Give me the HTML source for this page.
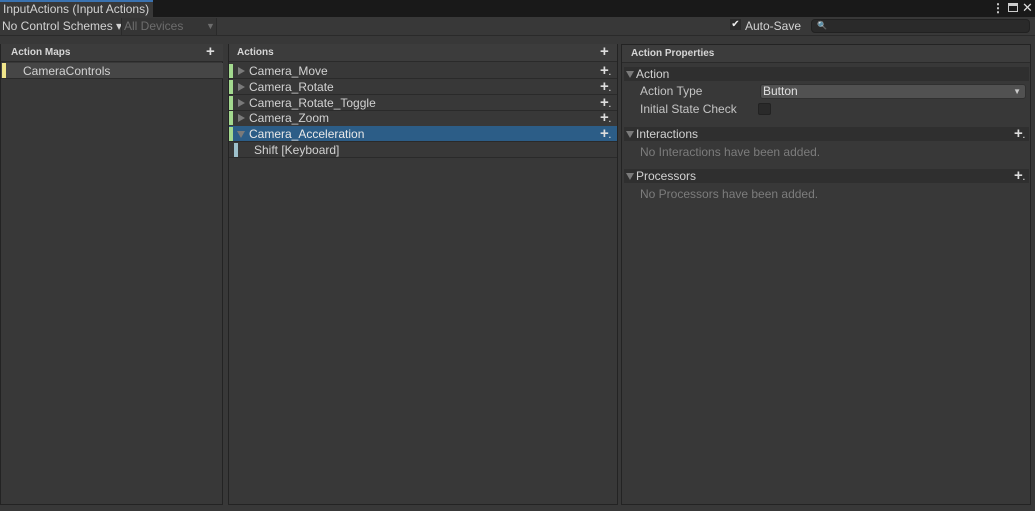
<!DOCTYPE html>
<html><head><style>
*{margin:0;padding:0;box-sizing:border-box}
body{width:1035px;height:511px;background:#383838;font-family:"Liberation Sans",sans-serif;font-size:12px;color:#c4c4c4;position:relative;overflow:hidden}
.a{position:absolute}
.row{position:absolute;height:16px;line-height:16px;border-bottom:1px solid #2a2a2a}
.plus{position:absolute;color:#ddd;font-size:15px;font-weight:bold;line-height:14px}
.tri{position:absolute;width:0;height:0}
.tr{border-top:4px solid transparent;border-bottom:4px solid transparent;border-left:7px solid #7a7a7a}
.td{border-left:4px solid transparent;border-right:4px solid transparent;border-top:7px solid #7a7a7a}
.bar{position:absolute;width:4px;height:14px}
</style></head><body>
<div class="a" style="left:0;top:0;width:1035px;height:17px;background:#191919"></div>
<div class="a" style="left:0;top:0;width:153px;height:17px;background:#383838;border-top:2px solid #3a72b0;padding-left:3px;line-height:15px;color:#d2d2d2">InputActions (Input Actions)</div>
<div class="a" style="left:992px;top:1px;color:#ddd;font-weight:bold;font-size:12px">⋮</div>
<div class="a" style="left:1008px;top:3px;width:10px;height:9px;border:1px solid #ccc;border-top:3px solid #ccc"></div>
<div class="a" style="left:1022px;top:0px;color:#ddd;font-size:13px">✕</div>
<div class="a" style="left:0;top:17px;width:1035px;height:19px;background:#383838;border-bottom:1px solid #2a2a2a"></div>
<div class="a" style="left:2px;top:19px;line-height:14px;color:#d2d2d2">No Control Schemes ▾</div>
<div class="a" style="left:121px;top:18px;width:96px;height:17px;background:#353535;border-left:1px solid #2a2a2a;border-right:1px solid #2a2a2a;line-height:16px;padding-left:2px;color:#6d6d6d">All Devices<span style="position:absolute;left:84px;font-size:9px">▼</span></div>
<div class="a" style="left:730px;top:19px;width:11px;height:11px;background:#2a2a2a;color:#eee;font-size:10px;line-height:11px;text-align:center">✔</div>
<div class="a" style="left:745px;top:19px;line-height:14px;color:#d2d2d2">Auto-Save</div>
<div class="a" style="left:811px;top:19px;width:219px;height:14px;background:#2a2a2a;border-radius:4px;border:1px solid #212121;color:#bbb;font-size:8px;padding-left:5px;line-height:12px">🔍</div>

<!-- left panel -->
<div class="a" style="left:1px;top:44px;width:222px;height:461px;background:#383838;border-right:1px solid #232323;border-bottom:1px solid #232323"></div>
<div class="a" style="left:1px;top:44px;width:222px;height:18px;background:#3c3c3c;border-bottom:1px solid #2a2a2a;font-weight:bold;font-size:10px;line-height:18px;padding-left:10px;color:#d6d6d6">Action Maps</div>
<div class="plus" style="left:206px;top:45px">+</div>
<div class="row" style="left:1px;top:63px;width:222px;background:#464646"></div>
<div class="bar" style="left:2px;top:63px;background:#f0e58a;height:15px"></div>
<div class="a" style="left:23px;top:63px;line-height:16px;color:#d2d2d2">CameraControls</div>
<div class="a" style="left:0;top:44px;width:1px;height:461px;background:#232323"></div>

<!-- actions panel -->
<div class="a" style="left:228px;top:44px;width:390px;height:461px;border-left:1px solid #232323;border-right:1px solid #232323;border-bottom:1px solid #232323"></div>
<div class="a" style="left:229px;top:44px;width:388px;height:18px;background:#3c3c3c;border-bottom:1px solid #2a2a2a;font-weight:bold;font-size:10px;line-height:18px;padding-left:8px;color:#d6d6d6">Actions</div>
<div class="plus" style="left:600px;top:45px">+</div>

<div class="row" style="left:229px;top:63px;width:388px"></div>
<div class="row" style="left:229px;top:79px;width:388px"></div>
<div class="row" style="left:229px;top:95px;width:388px"></div>
<div class="row" style="left:229px;top:111px;width:388px"></div>
<div class="row" style="left:229px;top:126px;width:388px;height:16px;background:#2c5d87"></div>
<div class="row" style="left:229px;top:142px;width:388px"></div>
<div class="bar" style="left:229px;top:64px;background:#a3d98f"></div>
<div class="bar" style="left:229px;top:80px;background:#a3d98f"></div>
<div class="bar" style="left:229px;top:96px;background:#a3d98f"></div>
<div class="bar" style="left:229px;top:111px;background:#a3d98f"></div>
<div class="bar" style="left:229px;top:127px;background:#a3d98f"></div>
<div class="bar" style="left:234px;top:143px;background:#9ec1cc"></div>
<div class="tri tr" style="left:238px;top:67px"></div>
<div class="tri tr" style="left:238px;top:83px"></div>
<div class="tri tr" style="left:238px;top:99px"></div>
<div class="tri tr" style="left:238px;top:114px"></div>
<div class="tri td" style="left:237px;top:131px"></div>
<div class="a" style="left:249px;top:63px;line-height:16px;color:#d2d2d2">Camera_Move</div>
<div class="a" style="left:249px;top:79px;line-height:16px;color:#d2d2d2">Camera_Rotate</div>
<div class="a" style="left:249px;top:95px;line-height:16px;color:#d2d2d2">Camera_Rotate_Toggle</div>
<div class="a" style="left:249px;top:110px;line-height:16px;color:#d2d2d2">Camera_Zoom</div>
<div class="a" style="left:249px;top:126px;line-height:16px;color:#e8e8e8">Camera_Acceleration</div>
<div class="a" style="left:254px;top:142px;line-height:16px;color:#d2d2d2">Shift [Keyboard]</div>
<div class="plus" style="left:600px;top:64px">+<span style="font-size:8px">.</span></div>
<div class="plus" style="left:600px;top:80px">+<span style="font-size:8px">.</span></div>
<div class="plus" style="left:600px;top:96px">+<span style="font-size:8px">.</span></div>
<div class="plus" style="left:600px;top:111px">+<span style="font-size:8px">.</span></div>
<div class="plus" style="left:600px;top:127px">+<span style="font-size:8px">.</span></div>

<!-- properties -->
<div class="a" style="left:621px;top:44px;width:410px;height:461px;border:1px solid #232323"></div>
<div class="a" style="left:622px;top:45px;width:408px;height:18px;background:#3c3c3c;border-bottom:1px solid #2a2a2a;font-weight:bold;font-size:10px;line-height:17px;padding-left:9px;color:#d6d6d6">Action Properties</div>
<div class="a" style="left:624px;top:67px;width:405px;height:14px;background:#2f2f2f"></div>
<div class="tri td" style="left:626px;top:71px"></div>
<div class="a" style="left:636px;top:67px;line-height:14px;color:#d2d2d2">Action</div>
<div class="a" style="left:640px;top:84px;line-height:14px">Action Type</div>
<div class="a" style="left:760px;top:84px;width:266px;height:15px;background:#515151;border-radius:3px;border:1px solid #303030;line-height:13px;padding-left:2px;color:#e0e0e0">Button<span style="position:absolute;right:4px;font-size:8px;color:#ccc">▼</span></div>
<div class="a" style="left:640px;top:102px;line-height:14px">Initial State Check</div>
<div class="a" style="left:758px;top:103px;width:13px;height:12px;background:#2a2a2a;border:1px solid #222;border-radius:2px"></div>
<div class="a" style="left:624px;top:127px;width:405px;height:14px;background:#2f2f2f"></div>
<div class="tri td" style="left:626px;top:131px"></div>
<div class="a" style="left:636px;top:127px;line-height:14px;color:#d2d2d2">Interactions</div>
<div class="plus" style="left:1014px;top:127px">+<span style="font-size:8px">.</span></div>
<div class="a" style="left:640px;top:145px;line-height:14px;color:#7c7c7c">No Interactions have been added.</div>
<div class="a" style="left:624px;top:169px;width:405px;height:14px;background:#2f2f2f"></div>
<div class="tri td" style="left:626px;top:173px"></div>
<div class="a" style="left:636px;top:169px;line-height:14px;color:#d2d2d2">Processors</div>
<div class="plus" style="left:1014px;top:169px">+<span style="font-size:8px">.</span></div>
<div class="a" style="left:640px;top:187px;line-height:14px;color:#7c7c7c">No Processors have been added.</div>
</body></html>
